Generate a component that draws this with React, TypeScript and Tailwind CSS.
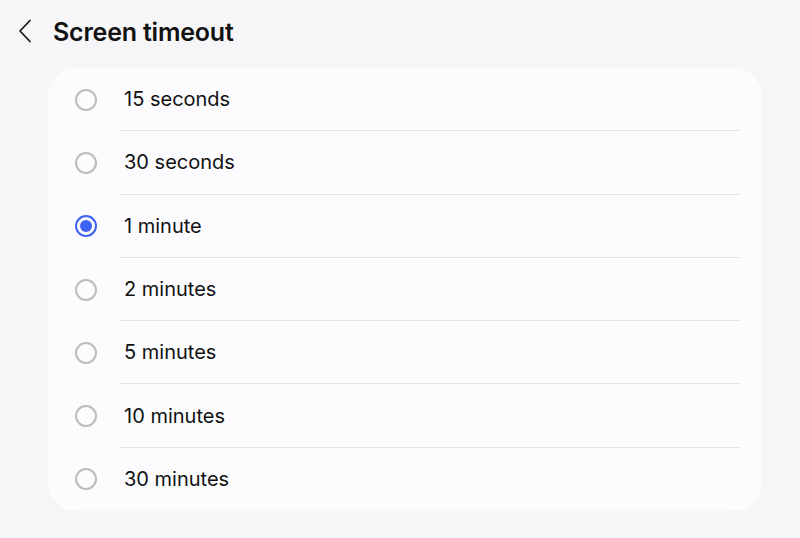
import React, { useState } from 'react';

const opciones = ['15 seconds', '30 seconds', '1 minute', '2 minutes', '5 minutes', '10 minutes', '30 minutes'];

const App = () => {
  const [seleccion, setSeleccion] = useState('1 minute');

  return (
    <div className="w-[800px] h-[538px] bg-[#f6f6f8] font-['Inter',sans-serif] text-[#111111] overflow-hidden">
      <div className="flex flex-row items-center h-[62px] pl-[18px]">
        <svg width="14" height="24" viewBox="0 0 14 24" className="mr-[21px]">
          <path d="M12 1.5 L2 12 L12 22.5" fill="none" stroke="#1a1a1a" strokeWidth="1.8" strokeLinecap="round" strokeLinejoin="round" />
        </svg>
        <h1 className="text-[25px] font-semibold tracking-[-0.2px] pt-[3px]">Screen timeout</h1>
      </div>
      <ul className="ml-[48px] mt-[6px] w-[714px] bg-[#fcfcfe] rounded-[28px] flex flex-col">
        {opciones.map((op, index) => (
          <li
            key={index}
            onClick={() => setSeleccion(op)}
            className="flex flex-row items-center h-[63.3px] cursor-pointer"
          >
            <div className="w-[72px] flex justify-start pl-[27px]">
              {seleccion === op ? (
                <span className="w-[22px] h-[22px] rounded-full border-2 border-[#3e63f2] flex items-center justify-center">
                  <span className="w-[12px] h-[12px] rounded-full bg-[#3e63f2]" />
                </span>
              ) : (
                <span className="w-[22px] h-[22px] rounded-full border-2 border-[#bcbcbc]" />
              )}
            </div>
            <div
              className={`flex-1 h-full flex items-center mr-[22px] ${
                index < opciones.length - 1 ? 'border-b border-[#e4e4e6]' : ''
              }`}
            >
              <span className="text-[20px] ml-[4px]">{op}</span>
            </div>
          </li>
        ))}
      </ul>
    </div>
  );
};

export default App;
